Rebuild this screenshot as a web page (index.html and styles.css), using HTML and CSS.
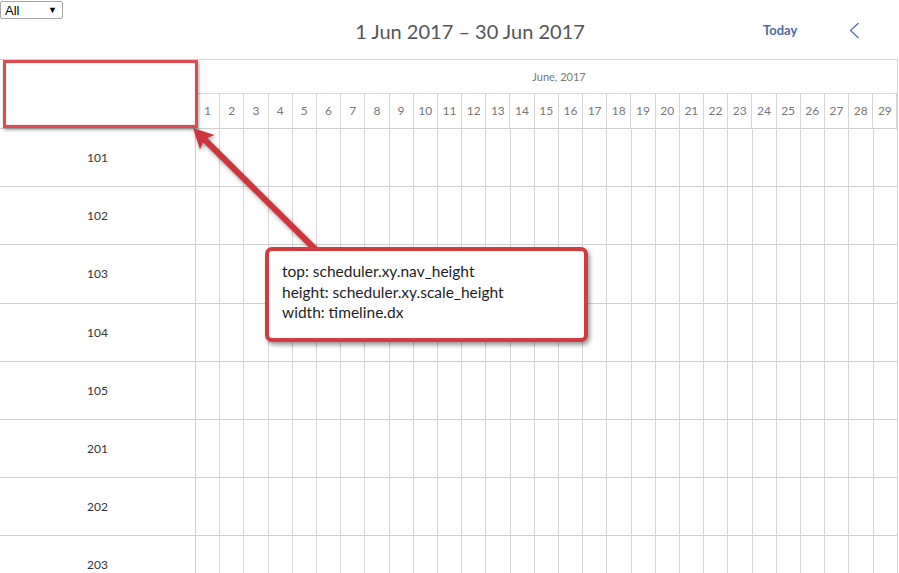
FILE: index.html
```html
<!DOCTYPE html>
<html>
<head>
<meta charset="utf-8">
<link rel="stylesheet" href="styles.css">
</head>
<body>
<div class="page">
  <header class="nav">
    <div class="select"><span>All</span><span class="caret">▼</span></div>
    <div class="title">1 Jun 2017 – 30 Jun 2017</div>
    <div class="nav-right">
      <span class="today">Today</span>
      <svg class="prev" width="11" height="17" viewBox="0 0 11 17"><polyline points="9.5,1 1.5,8.5 9.5,16" fill="none" stroke="#4b6c9e" stroke-width="1.2"/></svg>
    </div>
  </header>
  <div class="timeline">
    <div class="head">
      <div class="corner"></div>
      <div class="scale-wrap">
        <div class="scale">
          <div class="month">June, 2017</div>
          <div class="days">
            <div class="day">1</div><div class="day">2</div><div class="day">3</div><div class="day">4</div><div class="day">5</div><div class="day">6</div><div class="day">7</div><div class="day">8</div><div class="day">9</div><div class="day">10</div><div class="day">11</div><div class="day">12</div><div class="day">13</div><div class="day">14</div><div class="day">15</div><div class="day">16</div><div class="day">17</div><div class="day">18</div><div class="day">19</div><div class="day">20</div><div class="day">21</div><div class="day">22</div><div class="day">23</div><div class="day">24</div><div class="day">25</div><div class="day">26</div><div class="day">27</div><div class="day">28</div><div class="day">29</div>
          </div>
        </div>
      </div>
    </div>
    <div class="body">
      <div class="row"><div class="label">101</div><div class="track"></div></div>
      <div class="row"><div class="label">102</div><div class="track"></div></div>
      <div class="row"><div class="label">103</div><div class="track"></div></div>
      <div class="row"><div class="label">104</div><div class="track"></div></div>
      <div class="row"><div class="label">105</div><div class="track"></div></div>
      <div class="row"><div class="label">201</div><div class="track"></div></div>
      <div class="row"><div class="label">202</div><div class="track"></div></div>
      <div class="row"><div class="label">203</div><div class="track"></div></div>
    </div>
  </div>
  <div class="hl-box"></div>
  <svg class="arrow" width="899" height="573" viewBox="0 0 899 573">
    <line x1="204" y1="139" x2="320" y2="254" stroke="#cf363b" stroke-width="6"/>
    <polygon points="193,128 214.5,135 204.3,139.3 200,149.5" fill="#cf363b"/>
  </svg>
  <div class="callout">
    <div>top: scheduler.xy.nav_height</div>
    <div>height: scheduler.xy.scale_height</div>
    <div>width: timeline.dx</div>
  </div>
</div>
</body>
</html>
```

FILE: styles.css
```css
html, body {
  margin: 0;
  padding: 0;
  background: #fff;
  overflow: hidden;
}
.page {
  position: relative;
  width: 899px;
  height: 573px;
  overflow: hidden;
  font-family: Lato, "Open Sans", sans-serif;
}
.nav {
  height: 59px;
  display: grid;
  grid-template-columns: 195px 550px 154px;
  align-items: center;
}
.select {
  align-self: start;
  margin-top: 1px;
  width: 63px;
  height: 18px;
  box-sizing: border-box;
  border: 1px solid #a6a6a6;
  border-radius: 2px;
  display: flex;
  align-items: center;
  justify-content: space-between;
  padding: 0 5px 0 4px;
  font-family: "Liberation Sans", Arial, sans-serif;
  font-size: 13px;
  color: #000;
}
.caret {
  font-size: 9px;
}
.title {
  text-align: center;
  font-size: 20px;
  color: #555;
  padding-top: 3px;
}
.nav-right {
  display: flex;
  align-items: center;
  padding-left: 18px;
}
.today {
  font-weight: bold;
  font-size: 13px;
  color: #4b6c9e;
}
.prev {
  margin-left: 52px;
  margin-top: 2px;
}
.timeline {
  width: 898px;
  border-top: 1px solid #d6d6d6;
  border-right: 1px solid #d6d6d6;
  box-sizing: border-box;
}
.head {
  display: flex;
}
.corner {
  width: 196px;
  flex: none;
  box-sizing: border-box;
  border-right: 1px solid #cfcfcf;
  border-bottom: 1px solid #cfcfcf;
}
.scale-wrap {
  width: 701px;
  overflow: hidden;
}
.scale {
  width: 726px;
}
.month {
  height: 34px;
  box-sizing: border-box;
  border-bottom: 1px solid #d6d6d6;
  text-align: center;
  line-height: 33px;
  font-size: 11px;
  color: #767676;
}
.days {
  display: flex;
  height: 35px;
  box-sizing: border-box;
  border-bottom: 1px solid #cfcfcf;
}
.day {
  width: 24.2px;
  flex: none;
  box-sizing: border-box;
  border-right: 1px solid #d6d6d6;
  text-align: center;
  line-height: 34px;
  font-size: 12px;
  color: #777;
}
.row {
  display: flex;
  height: 58.2px;
  box-sizing: border-box;
  border-bottom: 1px solid #cfcfcf;
}
.label {
  width: 196px;
  flex: none;
  box-sizing: border-box;
  border-right: 1px solid #cfcfcf;
  display: flex;
  align-items: center;
  justify-content: center;
  font-size: 12px;
  color: #333;
}
.track {
  flex: 1;
  background: repeating-linear-gradient(to right, transparent 0, transparent 23.2px, #d6d6d6 23.2px, #d6d6d6 24.2px);
}
.hl-box {
  position: absolute;
  left: 3px;
  top: 60px;
  width: 195px;
  height: 68px;
  box-sizing: border-box;
  border: 3px solid #da4c51;
  box-shadow: 1px 2px 3px rgba(0, 0, 0, 0.35), inset 0 0 1px rgba(150, 20, 20, 0.6);
}
.arrow {
  position: absolute;
  left: 0;
  top: 0;
  pointer-events: none;
  filter: drop-shadow(1px 2px 2px rgba(0, 0, 0, 0.35));
}
.callout {
  position: absolute;
  left: 265px;
  top: 247px;
  width: 323px;
  height: 95px;
  box-sizing: border-box;
  border: 4px solid #d23c40;
  border-radius: 7px;
  background: #fff;
  box-shadow: 2px 3px 4px rgba(0, 0, 0, 0.4);
  padding: 10px 0 0 13px;
  font-size: 15.5px;
  line-height: 20.5px;
  color: #1e1e1e;
}
```
